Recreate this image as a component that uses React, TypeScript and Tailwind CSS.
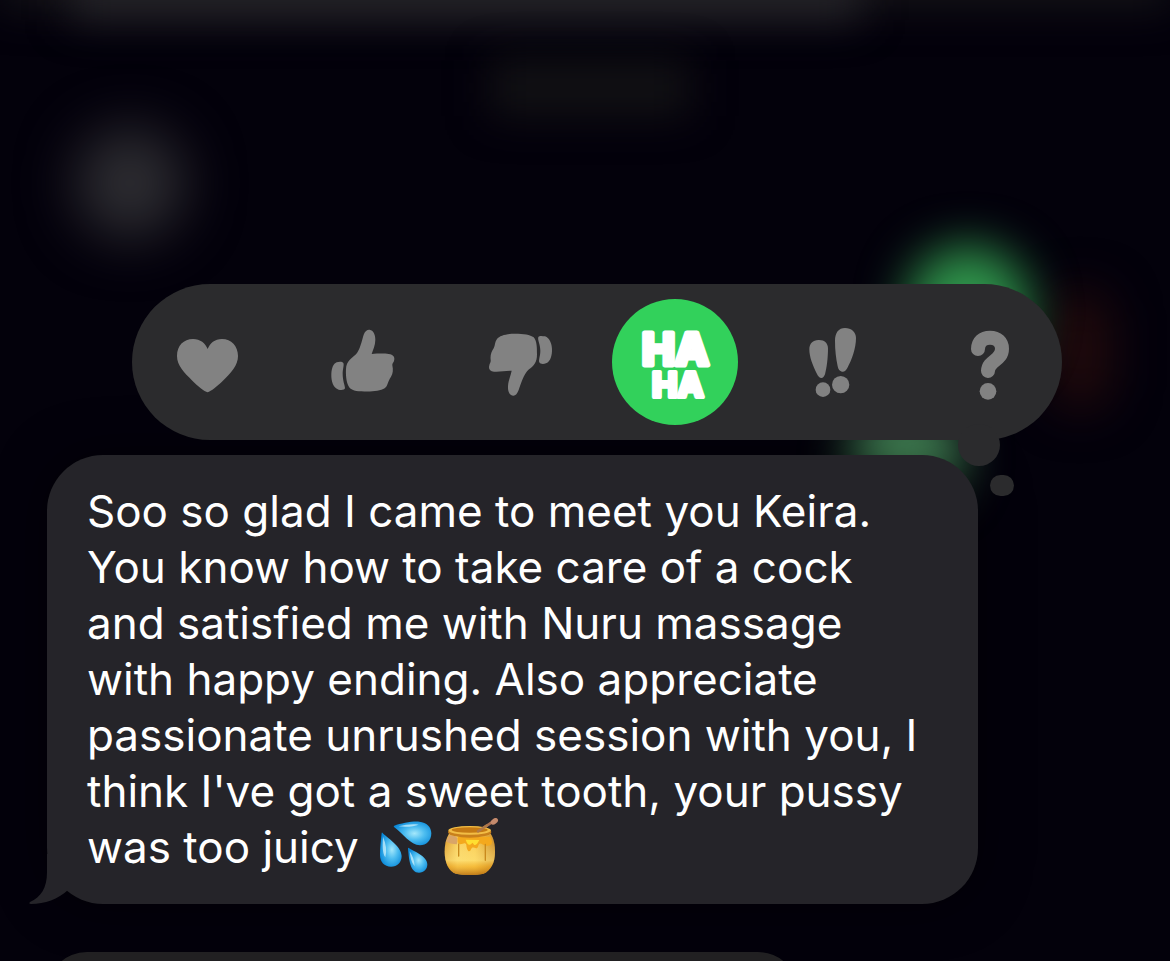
import type { ReactNode } from "react";
import clsx from "clsx";

type Reaction = {
  id: string;
  label: string;
  viewBox: string;
  art: ReactNode;
};

const reactions: Reaction[] = [
  {
    id: "love",
    label: "Love",
    viewBox: "-18 -3 378 378",
    art: (
      <path d="M173 277 C163 274 143 258 127 242 C102 217 81 197 81 168 C81 137 101 117 129 117 C151 117 166 130 173 147 C180 130 194 117 216 117 C244 117 264 138 264 168 C264 197 243 219 218 243 C202 258 183 274 173 277 Z" />
    ),
  },
  {
    id: "like",
    label: "Like",
    viewBox: "450 -3 378 378",
    art: (
      <>
        <path d="M641 104 C645 93 652 88 659 89 C670 91 676 103 676 119 C676 136 669 149 665 162 C683 161 701 160 716 162 C730 164 736 171 732 183 C731 188 726 190 727 196 C730 209 729 221 723 230 C713 244 714 257 704 265 C690 274 660 276 634 274 C611 273 600 268 595 257 C589 245 587 225 588 207 C589 185 604 175 618 163 C630 149 635 124 641 104 Z" />
        <path d="M560 187 C567 184 577 184 580 189 C583 195 578 207 578 221 C578 242 585 257 585 264 C584 270 575 271 566 269 C550 264 543 244 544 222 C545 204 550 191 560 187 Z" />
      </>
    ),
  },
  {
    id: "dislike",
    label: "Dislike",
    viewBox: "-12 27 378 378",
    art: (
      <>
        <path d="M111 147 C119 136 141 131 165 131 C191 131 211 134 221 142 C231 152 231 174 231 193 C231 217 223 227 207 238 C190 253 184 280 176 300 C172 311 166 318 159 317 C148 315 143 305 144 288 C145 271 152 258 155 242 C137 243 119 246 102 245 C89 243 85 237 88 226 C89 219 93 218 92 210 C90 195 95 184 101 175 C106 165 104 156 111 147 Z" />
        <path d="M235 141 C239 136 247 138 255 139 C269 144 277 163 276 183 C275 203 269 216 258 220 C250 223 240 222 238 217 C235 210 241 199 241 182 C241 163 232 150 235 141 Z" />
      </>
    ),
  },
  {
    id: "laugh",
    label: "Laugh",
    viewBox: "-63 -63 126 126",
    art: (
      <text
        fill="#fff"
        stroke="#fff"
        strokeLinejoin="round"
        strokeLinecap="round"
        fontFamily="Inter, sans-serif"
        fontWeight="800"
      >
        <tspan x="-33" y="3" fontSize="44" strokeWidth="5">
          HA
        </tspan>
        <tspan x="-23" y="35" fontSize="34" strokeWidth="4">
          HA
        </tspan>
      </text>
    ),
  },
  {
    id: "emphasize",
    label: "Emphasize",
    viewBox: "-36 27 378 378",
    art: (
      <>
        <path d="M115 150 C133 149 144 159 144 175 C144 204 140 235 135 253 C132 261 128 265 123 264 C117 263 114 258 111 252 C98 226 88 201 88 178 C88 160 99 151 115 150 Z" />
        <path d="M195 114 C214 114 228 126 228 144 C228 176 215 210 202 234 C198 242 193 246 186 245 C179 244 175 239 173 229 C168 205 165 180 165 153 C165 128 176 114 195 114 Z" />
        <circle cx="129" cy="299" r="22" />
        <circle cx="182" cy="284" r="26" />
      </>
    ),
  },
  {
    id: "question",
    label: "Question",
    viewBox: "432 27 378 378",
    art: (
      <>
        <path
          d="M594 177 C594 155 608 143 630 143 C652 143 666 156 666 176 C666 212 625 211 624 243"
          fill="none"
          stroke="currentColor"
          strokeWidth="42"
          strokeLinecap="round"
        />
        <circle cx="624" cy="304" r="25" />
      </>
    ),
  },
];

const messageLines = [
  "Soo so glad I came to meet you Keira.",
  "You know how to take care of a cock",
  "and satisfied me with Nuru massage",
  "with happy ending. Also appreciate",
  "passionate unrushed session with you, I",
  "think I've got a sweet tooth, your pussy",
];

function SweatDrops() {
  return (
    <svg viewBox="57 60 162 174" className="h-[58px] w-[54px]" role="img" aria-label="Sweat droplets">
      <defs>
        <radialGradient id="drop" cx="0.55" cy="0.5" r="0.6">
          <stop offset="0" stopColor="#a5e8fb" />
          <stop offset="0.45" stopColor="#4dbdf0" />
          <stop offset="1" stopColor="#0787d8" />
        </radialGradient>
      </defs>
      <g fill="url(#drop)">
        <path d="M103 83 C123 76 157 69 178 71 C200 73 214 87 214 106 C214 128 199 142 180 142 C151 142 128 105 103 88 C101 86 101 84 103 83 Z" />
        <path d="M67 104 C80 119 124 143 125 174 C125 193 112 206 93 206 C73 206 60 192 60 171 C60 148 63 124 65 106 C65 104 66 103 67 104 Z" />
        <path d="M146 150 C160 159 202 174 202 199 C202 214 192 224 177 224 C151 224 147 186 144 152 C144 150 145 149 146 150 Z" />
      </g>
      <g fill="#e3fbff" opacity="0.65">
        <path d="M116 85 C137 80 157 77 176 80 C163 84 142 89 116 85 Z" />
        <path d="M69 116 C78 137 81 158 76 178 C66 163 68 139 69 116 Z" />
        <path d="M149 160 C158 174 163 187 164 204 C152 191 151 174 149 160 Z" />
      </g>
    </svg>
  );
}

function HoneyPot() {
  return (
    <svg viewBox="249 54 168 174" className="h-[58px] w-[56px]" role="img" aria-label="Honey pot">
      <defs>
        <linearGradient id="pot" x1="0" x2="1" y1="0" y2="0">
          <stop offset="0" stopColor="#d9901b" />
          <stop offset="0.25" stopColor="#f8cc55" />
          <stop offset="0.6" stopColor="#f9c643" />
          <stop offset="1" stopColor="#c47b13" />
        </linearGradient>
        <linearGradient id="potShade" x1="0" x2="0" y1="0" y2="1">
          <stop offset="0.2" stopColor="#fff0a0" stopOpacity="0.2" />
          <stop offset="0.65" stopColor="#ffe985" stopOpacity="0.6" />
          <stop offset="0.8" stopColor="#f0b030" stopOpacity="0.5" />
          <stop offset="1" stopColor="#a85c08" stopOpacity="0.7" />
        </linearGradient>
      </defs>
      <path d="M350 98 L394 68" stroke="#a96f51" strokeWidth="8" strokeLinecap="round" />
      <ellipse cx="403" cy="64" rx="12" ry="8" fill="#c58a6c" transform="rotate(-35 403 64)" />
      {["url(#pot)", "url(#potShade)"].map((fill) => (
        <path
          key={fill}
          d="M267 101 C257 117 254 135 254 155 C254 188 266 213 287 221 C309 226 350 226 371 221 C393 211 405 188 405 157 C405 134 402 117 392 101 Z"
          fill={fill}
        />
      ))}
      <path d="M267 106 C278 104 287 108 293 115 L291 133 C277 133 265 130 258 124 Z" fill="#d9a568" />
      <path
        d="M293 110 H390 C400 125 398 139 379 137 C367 136 362 125 356 134 C350 158 340 133 333 148 C328 161 320 151 319 134 C313 122 303 141 293 127 Z"
        fill="#f4a91d"
      />
      <path
        d="M296 132 V168 M376 133 V181"
        stroke="#c98a1c"
        strokeWidth="4"
        strokeLinecap="round"
      />
      <path d="M317 119 C325 142 330 134 338 128 C345 142 352 132 358 120 Z" fill="#ffdf31" />
      <ellipse cx="329" cy="96" rx="65" ry="17" fill="#c9801b" />
      <ellipse cx="329" cy="91" rx="64" ry="13" fill="#f2bd45" />
      <ellipse cx="329" cy="90" rx="54" ry="8" fill="#c57a14" />
      <path d="M354 94 L380 77" stroke="#b07a48" strokeWidth="8" strokeLinecap="round" />
    </svg>
  );
}

function ReactionBar() {
  return (
    <div
      role="toolbar"
      aria-label="Reactions"
      className="relative z-10 ml-[132px] flex w-fit gap-[30px] rounded-full bg-[#2b2b2d] px-3 py-[15px]"
    >
      {reactions.map((reaction) => {
        const selected = reaction.id === "laugh";
        return (
          <button
            key={reaction.id}
            type="button"
            aria-label={reaction.label}
            aria-pressed={selected}
            className={clsx(
              "size-[126px] shrink-0 rounded-full text-[#828282]",
              selected && "bg-[#32d15b]"
            )}
          >
            <svg viewBox={reaction.viewBox} fill="currentColor" className="size-full">
              {reaction.art}
            </svg>
          </button>
        );
      })}
      <span className="absolute right-[62px] -bottom-[26px] size-[42px] rounded-full bg-[#2b2b2d]" />
      <span className="absolute right-12 -bottom-14 h-[21px] w-6 rounded-full bg-[#2b2b2d]" />
    </div>
  );
}

function MessageBubble() {
  return (
    <article className="relative mt-[15px] mr-48 ml-[47px] rounded-[56px] bg-[#252429] px-10 pt-7 pb-[29px] shadow-[0_0_50px_rgba(0,0,0,0.5)]">
      <p className="text-[44px] leading-[56px] whitespace-nowrap text-white">
        {messageLines.map((line) => (
          <span key={line} className="block">
            {line}{" "}
          </span>
        ))}
        <span className="flex h-14 items-center">
          was too juicy
          <span className="ml-5 flex items-center gap-2.5">
            <SweatDrops />
            <HoneyPot />
          </span>
        </span>
      </p>
      <svg
        viewBox="0 0 40 50"
        className="absolute bottom-0 -left-[18px] h-[50px] w-10"
        fill="#252429"
        aria-hidden="true"
      >
        <path d="M18 0 V18 C18 34 12 43 1 48 C0 49 0 50 2 50 C16 50 29 45 39 36 V0 Z" />
      </svg>
    </article>
  );
}

// blurred shapes of the conversation behind the menu
function Backdrop() {
  return (
    <div className="pointer-events-none absolute inset-0 overflow-hidden" aria-hidden="true">
      <div className="absolute inset-x-0 -top-10 h-12 bg-[#141317] blur-[20px]" />
      <div className="absolute -top-10 left-[70px] h-[60px] w-[790px] bg-[#232227] blur-[20px]" />
      <div className="absolute top-[60px] left-[490px] h-[56px] w-[200px] bg-[#121114] blur-[20px]" />
      <div className="absolute top-[128px] left-[75px] size-[110px] rounded-full bg-[#2e2d32] blur-[28px]" />
      <div className="absolute top-[290px] left-[1050px] h-[120px] w-[60px] rounded-full bg-[#220a0c] blur-[24px]" />
      <div className="absolute top-[246px] left-[906px] h-[130px] w-[124px] rounded-full bg-[#30964c] blur-[24px]" />
      <div className="absolute top-[412px] left-[850px] h-[90px] w-[112px] rounded-full bg-[#4b9460] blur-[24px]" />
    </div>
  );
}

export default function App() {
  return (
    <main className="relative h-screen overflow-hidden bg-[#03010b] pt-[284px] font-[Inter,sans-serif]">
      <Backdrop />
      <ReactionBar />
      <MessageBubble />
      <div className="relative mt-12 ml-[47px] h-24 w-[751px] rounded-[40px] bg-[#212022]" />
    </main>
  );
}
